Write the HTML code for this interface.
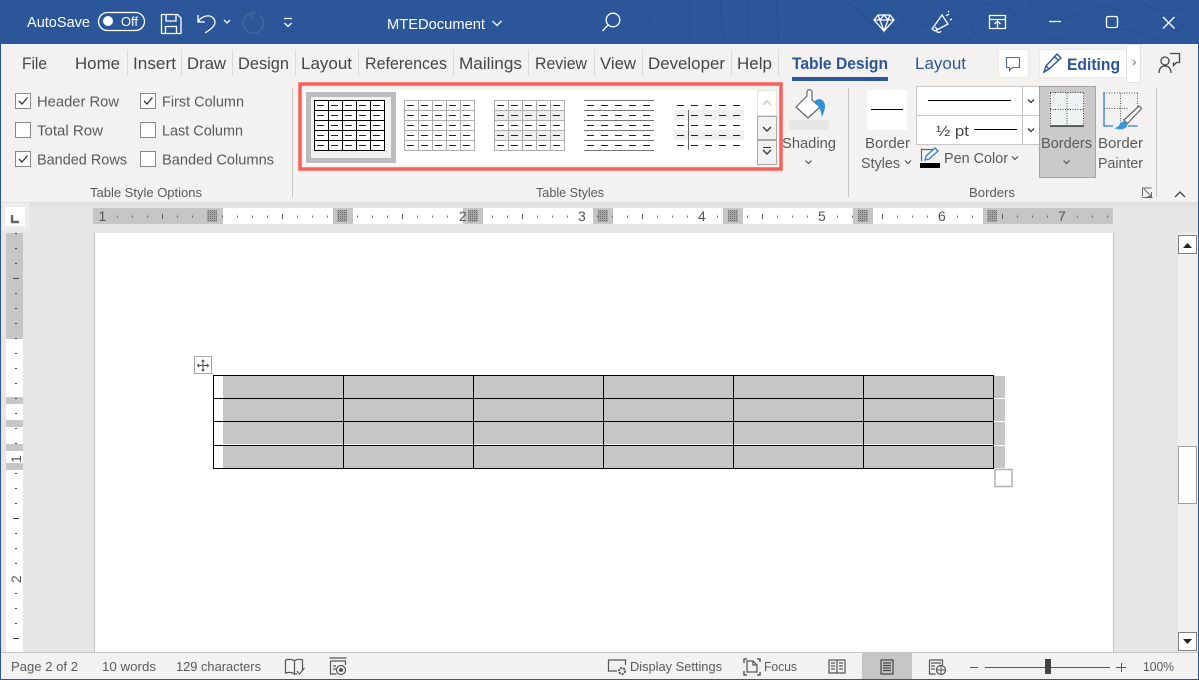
<!DOCTYPE html>
<html><head><meta charset="utf-8"><title>MTEDocument</title>
<style>
html,body{margin:0;padding:0;background:#fff;width:1199px;height:680px;overflow:hidden}
svg{display:block}
text{font-family:"Liberation Sans",sans-serif;fill:#484644}
.t{font-size:16.5px;fill:#484644}
.g{font-size:14.5px;fill:#5a5a5a}
.l{font-size:13px;fill:#5a5a5a}
.s{font-size:13px;fill:#5a5a5a}
.w{fill:#fff}
.r{font-size:14px;fill:#555}
.c{fill:none;stroke:#555;stroke-width:1.2}
.i{fill:none;stroke:#fff;stroke-width:1.3}
</style></head><body>
<svg width="1199" height="680" viewBox="0 0 1199 680" xmlns="http://www.w3.org/2000/svg">
<defs>
<g id="d" stroke="#222" fill="none"><path stroke-dasharray="7 7" d="M3 5.500H73M3 15.500H73M3 25.500H73M3 35.500H73M3 45.500H73"/></g>
<g id="grid" fill="none"><path d="M.5.5h70v50H.5zM14.500 0v50M28.500 0v50M42.500 0v50M56.500 0v50M0 10.500h70M0 20.500h70M0 30.500h70M0 40.500h70"/></g>
<pattern id="cell" width="2" height="2" patternUnits="userSpaceOnUse"><rect width="2" height="2" fill="#a4a4a4"/><rect width="1" height="1" fill="#6e6e6e"/></pattern>
</defs>
<!-- backgrounds -->
<rect width="1199" height="680" fill="#e6e6e6"/>
<rect width="1199" height="44" fill="#2b579a"/>
<g fill="none" stroke="#234c8d" stroke-width="1.500" opacity=".6">
<path d="M660 8c-8 2-12 8-10 14s8 6 12 3M672 4v22M690 0v44M720 0l4 44M748 0v44M776 0l3 44M800 0v44"/>
<path d="M845 2c15 6 20 20 35 25s25-5 25-15M905 40c20-20 45-28 60-20s10 22-5 20M975 8c15-10 35 0 50 15s35 22 50 8M1030 0c5 15 25 25 45 15s30-12 45-5M1080 44c15-15 40-20 60-10s35 0 45-12M1140 0c10 10 25 15 45 8"/>
</g>
<rect y="44" width="1199" height="158" fill="#f3f2f1"/>
<rect y="202" width="1199" height="6" fill="#dfdedc"/>
<rect y="205" width="1199" height="3" fill="#e4e4e4"/>
<rect x="1178" y="233" width="20" height="419" fill="#f0f0f0"/>
<rect x="95" y="233" width="1018" height="419" fill="#fff"/>
<path d="M94.500 233v419M1113.500 233v419" stroke="#c2c2c2"/>
<!-- window frame -->
<path d="M.5 44V680M1198.500 44V680M0 679.500H1199" stroke="#2b579a"/>

<!-- title bar -->
<text class="w" x="27" y="27" font-size="15" textLength="63" lengthAdjust="spacingAndGlyphs">AutoSave</text>
<rect x="98.500" y="12.500" width="46" height="18" rx="9" class="i"/>
<circle cx="108" cy="21" r="5" fill="#fff"/>
<text class="w" x="121" y="26" font-size="12.500" textLength="17" lengthAdjust="spacingAndGlyphs">Off</text>
<path class="i" stroke-width="1.500" d="M161.500 14.500h16l3.500 3.500v15.500h-19.500zM166 15v6h10v-6M165.500 33.500v-7h11v7"/>
<path class="i" stroke-width="1.500" d="M198 15v7h7M198 22c4-7 13-8 16-3 3 5-1 9-9 14"/>
<path class="i" d="M224 20l3 3 3-3"/>
<path fill="none" stroke="#41699f" stroke-width="1.500" d="M259 15a10 10 0 1 1-8-1.500M251 13.500l5-1M251 13.500l1 5"/>
<path class="i" d="M284 18.500h8M284.500 23l3.500 3.500 3.500-3.500"/>
<text class="w" x="387" y="29" font-size="15" textLength="98" lengthAdjust="spacingAndGlyphs">MTEDocument</text>
<path class="i" stroke-width="1.800" d="M492.500 21l4.500 4.500 4.500-4.500"/>
<circle class="i" cx="613" cy="20" r="6.800" stroke-width="1.400"/><path class="i" stroke-width="1.500" d="M608 25l-5.500 6"/>
<path class="i" stroke-width="1.400" d="M878 15h12l4 5-10 11-10-11zM874 20h20M880 20l4 11 4-11M878 15l2 5 4-5 4 5 2-5"/>
<path class="i" stroke-width="1.400" d="M932 29l10-14 6 9-13 7zM935 27l3 3M937 31c0 2 3 2 4 0M946 16l3-2M950 20l2-1M948 12l1-1"/>
<path class="i" stroke-width="1.400" d="M989.500 15.500h16v13h-16zM989.500 19.500h16M997.500 28v-6M994.500 24l3-3 3 3"/>
<path class="i" stroke-width="1.400" d="M1049 21.500h12"/>
<rect class="i" stroke-width="1.400" x="1106.500" y="16.500" width="11" height="11" rx="1.500"/>
<path class="i" stroke-width="1.400" d="M1163 17l11.500 11.500M1174.500 17L1163 28.500"/>

<!-- tabs -->
<g class="t">
<text class="t" x="22" y="69" textLength="25" lengthAdjust="spacingAndGlyphs">File</text>
<text class="t" x="75" y="69" textLength="45" lengthAdjust="spacingAndGlyphs">Home</text>
<text class="t" x="133" y="69" textLength="43" lengthAdjust="spacingAndGlyphs">Insert</text>
<text class="t" x="187" y="69" textLength="39" lengthAdjust="spacingAndGlyphs">Draw</text>
<text class="t" x="238" y="69" textLength="51" lengthAdjust="spacingAndGlyphs">Design</text>
<text class="t" x="301" y="69" textLength="51" lengthAdjust="spacingAndGlyphs">Layout</text>
<text class="t" x="365" y="69" textLength="82" lengthAdjust="spacingAndGlyphs">References</text>
<text class="t" x="459" y="69" textLength="63" lengthAdjust="spacingAndGlyphs">Mailings</text>
<text class="t" x="535" y="69" textLength="52" lengthAdjust="spacingAndGlyphs">Review</text>
<text class="t" x="600" y="69" textLength="36" lengthAdjust="spacingAndGlyphs">View</text>
<text class="t" x="648" y="69" textLength="77" lengthAdjust="spacingAndGlyphs">Developer</text>
<text class="t" x="737" y="69" textLength="35" lengthAdjust="spacingAndGlyphs">Help</text>
<text x="792" y="69" font-size="16.500" font-weight="bold" style="fill:#2b579a" textLength="96" lengthAdjust="spacingAndGlyphs">Table Design</text>
<text x="915" y="69" font-size="16.500" style="fill:#2b579a" textLength="51" lengthAdjust="spacingAndGlyphs">Layout</text>
</g>
<path stroke="#dcdbd9" d="M127.500 50v26M181.500 50v26M232.500 50v26M295.500 50v26M358.500 50v26M453.500 50v26M528.500 50v26M594.500 50v26M642.500 50v26M731.500 50v26M778.500 50v26"/>
<rect x="792" y="77" width="96" height="4" fill="#2b579a"/>
<rect x="998.500" y="49.500" width="30" height="28" rx="2" fill="#fff" stroke="#ebeae8"/>
<path fill="none" stroke="#4a6c9e" stroke-width="1.100" d="M1006.500 57.500h13v10h-7l-3 3v-3h-3z"/>
<rect x="1039.500" y="49.500" width="88" height="28" rx="2" fill="#fff" stroke="#ebeae8"/>
<path fill="none" stroke="#2b579a" stroke-width="1.400" d="M1044 72l2-6 11-12 4 4-12 11zM1046 66l3 3M1054 56l4 4"/>
<text x="1067" y="70" font-size="16.500" font-weight="bold" style="fill:#2b579a" textLength="53" lengthAdjust="spacingAndGlyphs">Editing</text>
<rect x="1126.500" y="44.500" width="14" height="38" fill="#fff" stroke="#e3e2e0"/>
<path d="M1133 60l2.500 2.500-2.500 2.500" fill="none" stroke="#888" stroke-width="1.200"/>
<circle cx="1165" cy="61" r="4" fill="none" stroke="#444" stroke-width="1.300"/>
<path fill="none" stroke="#444" stroke-width="1.300" d="M1159 73c0-5 3-7 6-7s6 2 6 7M1170 53.500h9.500v9h-3l-3 3v-3"/>

<!-- table style options -->
<g fill="#fff" stroke="#8a8886">
<rect x="15.500" y="93.500" width="15" height="15"/><rect x="15.500" y="122.500" width="15" height="15"/><rect x="15.500" y="151.500" width="15" height="15"/>
<rect x="140.500" y="93.500" width="15" height="15"/><rect x="140.500" y="122.500" width="15" height="15"/><rect x="140.500" y="151.500" width="15" height="15"/>
</g>
<path fill="none" stroke="#333" stroke-width="1.300" d="M19 101l3 3 5.500-6.500M19 159l3 3 5.500-6.500M144 101l3 3 5.500-6.500"/>
<text class="g" x="37" y="106.500" textLength="82" lengthAdjust="spacingAndGlyphs">Header Row</text>
<text class="g" x="37" y="135.500" textLength="66" lengthAdjust="spacingAndGlyphs">Total Row</text>
<text class="g" x="37" y="164.500" textLength="90" lengthAdjust="spacingAndGlyphs">Banded Rows</text>
<text class="g" x="162" y="106.500" textLength="82" lengthAdjust="spacingAndGlyphs">First Column</text>
<text class="g" x="162" y="135.500" textLength="81" lengthAdjust="spacingAndGlyphs">Last Column</text>
<text class="g" x="162" y="164.500" textLength="112" lengthAdjust="spacingAndGlyphs">Banded Columns</text>
<text class="l" x="90" y="197" textLength="112" lengthAdjust="spacingAndGlyphs">Table Style Options</text>
<path stroke="#c8c6c4" d="M292.500 88v109M848.500 88v109M1156.500 88v109"/>

<!-- gallery -->
<rect x="304" y="90" width="473" height="75" fill="#fff"/>
<path stroke="#d2d0ce" fill="none" d="M776.500 90v75"/>
<rect x="300" y="84" width="481" height="85" fill="none" stroke="#f9605a" stroke-width="3.500"/>
<rect x="308.500" y="94.500" width="85" height="66" fill="#f2f2f2" stroke="#bcbcbc" stroke-width="5"/>
<rect x="314" y="100" width="71" height="51" fill="#fff"/>
<use href="#grid" x="314" y="100" stroke="#000"/>
<use href="#d" x="314" y="100"/>
<rect x="494" y="110" width="70" height="10" fill="#eee"/><rect x="494" y="130" width="70" height="10" fill="#eee"/>
<use href="#grid" x="404" y="100" stroke="#adadad"/>
<use href="#d" x="404" y="100"/>
<use href="#grid" x="494" y="100" stroke="#adadad"/>
<use href="#d" x="494" y="100"/>
<path stroke="#777" d="M584 100.500h70M584 110.500h70M584 120.500h70M584 130.500h70M584 140.500h70M584 150.500h70"/>
<use href="#d" x="584" y="100"/>
<rect x="674" y="110" width="70" height="10" fill="#f0f0f0"/><rect x="674" y="130" width="70" height="10" fill="#f0f0f0"/>
<path stroke="#666" d="M688.500 110v40"/>
<use href="#d" x="674" y="100"/>
<rect x="757.500" y="90.500" width="19" height="25" fill="#fff" stroke="#e4e3e1"/>
<rect x="757.500" y="116.500" width="19" height="23" fill="#f3f2f1" stroke="#a8a8a8"/>
<rect x="757.500" y="140.500" width="19" height="24" fill="#f3f2f1" stroke="#a8a8a8"/>
<path fill="none" stroke="#c8c8c8" stroke-width="1.500" d="M763 105l4-4 4 4"/>
<path fill="none" stroke="#333" stroke-width="1.300" d="M763 127l4 4 4-4M763 150l4 4 4-4"/>
<path stroke="#333" d="M763 147.500h8"/>
<text class="l" x="536" y="197" textLength="68" lengthAdjust="spacingAndGlyphs">Table Styles</text>

<!-- shading -->
<path fill="#fff" stroke="#666" stroke-width="1.200" d="M796 107l11-11v-4c0-3 5-3 5 0v8l8 7-12 11z"/>
<path fill="#2f8fd8" d="M815 101c4-4 10-1 10 5 0 4-2 8-3 11-1-5-2-10-6-13z"/>
<rect x="789" y="120" width="40" height="10" fill="#e8e7e5"/>
<text class="g" x="782" y="148" textLength="54" lengthAdjust="spacingAndGlyphs">Shading</text>
<path class="c" d="M805.500 160.500l3 3 3-3"/>

<!-- borders -->
<rect x="867" y="90" width="40" height="40" fill="#fff"/>
<path stroke="#000" d="M871 109.500h32"/>
<text class="g" x="865" y="148" textLength="45" lengthAdjust="spacingAndGlyphs">Border</text>
<text class="g" x="861" y="168" textLength="39" lengthAdjust="spacingAndGlyphs">Styles</text>
<path class="c" d="M905 160.500l3 3 3-3"/>
<rect x="916.500" y="86.500" width="123" height="29" fill="#fff" stroke="#c8c6c4"/>
<rect x="916.500" y="115.500" width="123" height="29" fill="#fff" stroke="#c8c6c4"/>
<path stroke="#c8c6c4" d="M1022.500 87v57"/>
<path stroke="#000" d="M928 100.500h83M974 129.500h43"/>
<text x="936" y="136" font-size="15" fill="#333" textLength="33" lengthAdjust="spacingAndGlyphs">½ pt</text>
<path fill="none" stroke="#333" stroke-width="1.300" d="M1028 99.500l3 3 3-3M1028 128.500l3 3 3-3"/>
<path fill="none" stroke="#666" stroke-width="1.200" d="M921.500 161v-11.500h14"/>
<path fill="#fff" stroke="#2b7cd3" stroke-width="1.300" d="M925 160l1-4 9-8 3 3-9 8z"/>
<rect x="920" y="163" width="20" height="5" fill="#000"/>
<text class="g" x="944" y="163" textLength="64" lengthAdjust="spacingAndGlyphs">Pen Color</text>
<path class="c" d="M1012 156.500l3 3 3-3"/>
<rect x="1039.500" y="86.500" width="56" height="91" fill="#cbcac8" stroke="#a5a4a2"/>
<rect x="1050" y="93" width="34" height="33" fill="#eef2f2"/>
<path fill="none" stroke="#444" stroke-dasharray="1 1.500" d="M1050.500 93v33M1083.500 93v33M1050 92.500h34M1067 93v33M1050 109.500h34"/>
<path stroke="#111" stroke-width="1.300" d="M1050 126h34"/>
<text class="g" x="1041" y="148" textLength="51" lengthAdjust="spacingAndGlyphs">Borders</text>
<path class="c" d="M1063.500 160.500l3 3 3-3"/>
<path fill="none" stroke="#555" stroke-dasharray="1 1.500" d="M1104 93h34M1137.500 93v18M1120.500 93v33M1104 108.500h24"/>
<path fill="none" stroke="#2b7cd3" stroke-width="1.300" d="M1104 92v34h9M1128 126h9.500"/>
<path fill="#fff" stroke="#666" stroke-width="1.200" d="M1124 120l15-14 2.500 2.500-14 15z"/>
<path fill="#3a96dd" d="M1114 128c5 0 6-6 10-7l3.500 3c0 5-7 7-13.500 4z"/>
<text class="g" x="1098" y="148" textLength="45" lengthAdjust="spacingAndGlyphs">Border</text>
<text class="g" x="1098" y="168" textLength="45" lengthAdjust="spacingAndGlyphs">Painter</text>
<text class="l" x="969" y="197" textLength="46" lengthAdjust="spacingAndGlyphs">Borders</text>
<path fill="none" stroke="#666" d="M1142.500 196v-8h9M1144 189l7 7M1151.500 192v4.500h-4M1152.500 197.500h-10"/>
<path fill="none" stroke="#444" stroke-width="1.300" d="M1175 197l5-5 5 5"/>

<!-- horizontal ruler -->
<rect x="93" y="208" width="1020" height="16" fill="#c6c6c6"/>
<rect x="223" y="208" width="110" height="16" fill="#fff"/>
<rect x="353" y="208" width="110" height="16" fill="#fff"/>
<rect x="483" y="208" width="110" height="16" fill="#fff"/>
<rect x="613" y="208" width="110" height="16" fill="#fff"/>
<rect x="743" y="208" width="110" height="16" fill="#fff"/>
<rect x="873" y="208" width="110" height="16" fill="#fff"/>
<path stroke="#666" stroke-width="2" stroke-dasharray="1 14" d="M117 216.500H1113"/>
<path stroke="#555" d="M162.500 214v5M282.500 214v5M402.500 214v5M522.500 214v5M642.500 214v5M762.500 214v5M882.500 214v5M1002.500 214v5"/>
<g fill="url(#cell)">
<rect x="207" y="210" width="10" height="12"/><rect x="337" y="210" width="10" height="12"/><rect x="468" y="210" width="10" height="12"/><rect x="598" y="210" width="10" height="12"/><rect x="728" y="210" width="10" height="12"/><rect x="858" y="210" width="10" height="12"/><rect x="987" y="210" width="10" height="12"/>
</g>
<rect x="458" y="209" width="5" height="14" fill="#fff"/><rect x="578" y="209" width="8" height="14" fill="#fff"/><rect x="698" y="209" width="8" height="14" fill="#fff"/><rect x="818" y="209" width="8" height="14" fill="#fff"/><rect x="938" y="209" width="8" height="14" fill="#fff"/><rect x="1058" y="209" width="8" height="14" fill="#c6c6c6"/>
<text class="r" x="98.500" y="221">1</text><text class="r" x="459" y="221">2</text><text class="r" x="578" y="221">3</text><text class="r" x="698" y="221">4</text><text class="r" x="818" y="221">5</text><text class="r" x="938" y="221">6</text><text class="r" x="1058" y="221">7</text>
<rect x="0" y="203" width="30" height="28" fill="#ececec"/><rect x="0" y="44" width="1" height="190" fill="#2b579a"/>
<rect x="5" y="207" width="20" height="19" fill="#fff"/>
<path fill="none" stroke="#666" stroke-width="2.400" d="M12 215v7h7"/>

<!-- vertical ruler -->
<rect x="6" y="233" width="17" height="419" fill="#fff"/>
<rect x="6" y="233" width="17" height="106" fill="#c6c6c6"/>
<rect x="6" y="397" width="17" height="7" fill="#c6c6c6"/>
<rect x="6" y="420" width="17" height="7" fill="#c6c6c6"/>
<rect x="6" y="444" width="17" height="7" fill="#c6c6c6"/>
<rect x="6" y="463" width="17" height="7" fill="#c6c6c6"/>
<path stroke="#444" stroke-width="2" stroke-dasharray="1 14" d="M16 233V652"/>
<rect x="12" y="452" width="10" height="11" fill="#fff"/><rect x="12" y="572" width="10" height="12" fill="#fff"/>
<path stroke="#444" d="M13 278.500h6M13 638.500h6M13 518.500h6"/>
<text class="r" transform="translate(21 463) rotate(-90)">1</text>
<text class="r" transform="translate(21 583) rotate(-90)">2</text>

<!-- table -->
<rect x="223" y="376" width="782" height="92" fill="#c6c6c6"/>
<path stroke="#fff" d="M994 398.500h11M994 421.500h11M994 445.500h11M223 444.500h771"/>
<path fill="none" stroke="#000" d="M213.500 375.500h780v93h-780zM343.500 375v93M473.500 375v93M603.500 375v93M733.500 375v93M863.500 375v93M213 398.500h781M213 421.500h781M213 445.500h781"/>
<rect x="194.500" y="356.500" width="17" height="17" fill="#fff" stroke="#a6a6a6"/>
<path fill="none" stroke="#555" stroke-width="1.100" d="M203 360v11M197.500 365.500h11M201.500 361.500l1.500-1.500 1.500 1.500M201.500 369.500l1.500 1.500 1.500-1.500M199 364l-1.500 1.500 1.500 1.500M207 364l1.500 1.500-1.500 1.500"/>
<rect x="995" y="469.500" width="17" height="17" fill="#fff" stroke="#b0b0b0" stroke-width="1.500"/>

<!-- scrollbar -->
<rect x="1178.500" y="235.500" width="18" height="18" fill="#fff" stroke="#808080"/>
<path d="M1183 248l4.500-5 4.500 5z" fill="#222"/>
<rect x="1178.500" y="446.500" width="18" height="57" fill="#fff" stroke="#a0a0a0"/>
<rect x="1178.500" y="632.500" width="18" height="18" fill="#fff" stroke="#808080"/>
<path d="M1183 639l4.500 5 4.500-5z" fill="#222"/>

<!-- status bar -->
<rect x="1" y="653" width="1197" height="26" fill="#f3f2f1"/>
<path stroke="#c6c6c6" d="M1 652.500h1197"/>
<rect x="862" y="653" width="50" height="26" fill="#c8c6c4"/>
<text class="s" x="11" y="671" textLength="67" lengthAdjust="spacingAndGlyphs">Page 2 of 2</text>
<text class="s" x="102" y="671" textLength="54" lengthAdjust="spacingAndGlyphs">10 words</text>
<text class="s" x="176" y="671" textLength="85" lengthAdjust="spacingAndGlyphs">129 characters</text>
<path fill="none" stroke="#555" stroke-width="1.200" d="M285.500 660c4-1 7-1 9 1 2-2 5-2 8-1v10M285.500 660v13c3-1 6-1 9 1v-13M294 674l3 0M297 671l2.500 3 5-6"/>
<path fill="none" stroke="#555" stroke-width="1.200" d="M329.500 658h17M330.500 661h15v4M330.500 661v13h6M333 666h3M333 669h3"/><circle cx="341" cy="670" r="4.500" fill="none" stroke="#555" stroke-width="1.200"/><circle cx="341" cy="670" r="2" fill="#555"/>
<path fill="none" stroke="#555" stroke-width="1.200" d="M617 671h-8.500v-11h17v5"/><circle cx="622" cy="671" r="3" fill="none" stroke="#555" stroke-width="2" stroke-dasharray="2 1"/>
<text class="s" x="630" y="671" textLength="92" lengthAdjust="spacingAndGlyphs">Display Settings</text>
<path fill="none" stroke="#555" stroke-width="1.200" d="M747 661h6l4 4v7h-10zM753 661v4h4"/><path fill="none" stroke="#444" stroke-width="1.300" d="M744 663v-4h3M757 659h3v3M744 671v4h3M757 675h3v-3"/>
<text class="s" x="764" y="671" textLength="33" lengthAdjust="spacingAndGlyphs">Focus</text>
<path fill="none" stroke="#555" stroke-width="1.200" d="M829 660h16v13h-16zM837 660v13M831 663h4M831 666h4M831 669h4M839 663h4M839 666h4M839 669h4"/>
<path fill="none" stroke="#444" stroke-width="1.200" d="M881 660h12v14h-12zM883 663h8M883 665.500h8M883 668h8M883 670.500h8"/>
<path fill="none" stroke="#555" stroke-width="1.200" d="M929.500 660h13v5M929.500 660v14h6M931 663h10M931 666h4M931 669h4"/><circle cx="941" cy="670" r="4.500" fill="none" stroke="#555" stroke-width="1.200"/><path stroke="#555" d="M936.500 670h9M941 665.500v9"/>
<path stroke="#555" d="M970 667.500h8M985 667.500h125M1116 667.500h10M1121.500 663v9"/>
<rect x="1045" y="659" width="6" height="15" fill="#444"/>
<text class="s" x="1143" y="671" textLength="31" lengthAdjust="spacingAndGlyphs">100%</text>
</svg>
</body></html>
